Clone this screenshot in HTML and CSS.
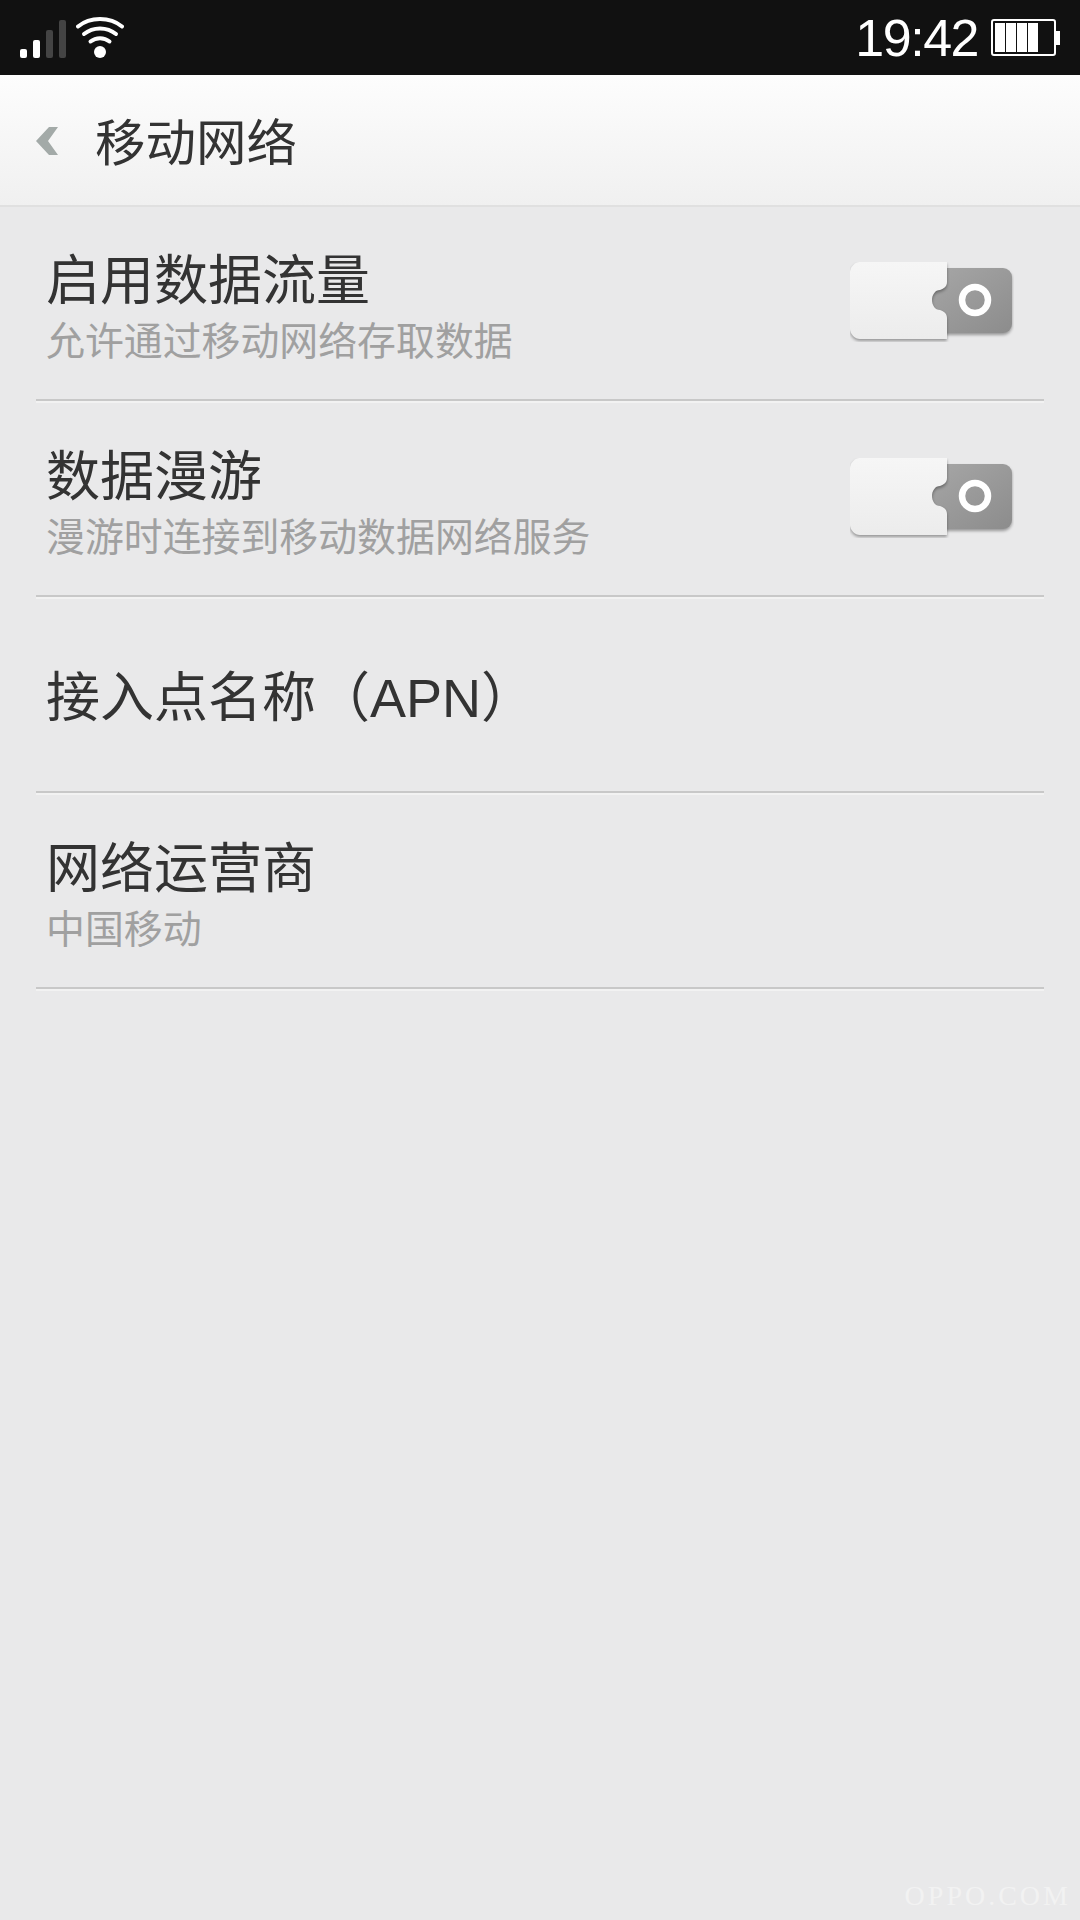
FILE: index.html
```html
<!DOCTYPE html>
<html lang="zh-CN">
<head>
    <meta charset="UTF-8">
    <title>移动网络</title>
    <link rel="stylesheet" href="styles.css">
</head>
<body>
    <svg class="defs" width="0" height="0">
        <defs>
            <linearGradient id="cap" x1="0" y1="0" x2="0" y2="1">
                <stop offset="0" stop-color="#f6f6f6"/>
                <stop offset="1" stop-color="#ececec"/>
            </linearGradient>
            <linearGradient id="track" x1="0" y1="0" x2="1" y2="1">
                <stop offset="0" stop-color="#a8a8a8"/>
                <stop offset="1" stop-color="#8c8c8c"/>
            </linearGradient>
            <symbol id="switch" viewBox="0 0 164 80">
                <rect class="switch-part" x="70" y="6" width="92" height="65" rx="9" fill="url(#track)"/>
                <circle cx="125" cy="38" r="13" fill="none" stroke="#fff" stroke-width="6.500"/>
                <path class="switch-part" d="M10 0H97V20C97 25 93 27 90 28C85 28 82 33 82 38C82 43 85 48 90 48C93 49 97 51 97 56V77H10C5 77 0 72 0 67V10C0 5 5 0 10 0Z" fill="url(#cap)"/>
            </symbol>
        </defs>
    </svg>

    <div class="statusbar">
        <div class="status-left">
            <svg class="signal" width="48" height="38" viewBox="0 0 48 38">
                <rect x="0" y="29" width="7" height="9" rx="2" fill="#fff"/>
                <rect x="13" y="20" width="7" height="18" rx="2" fill="#fff"/>
                <rect x="26" y="10" width="7" height="28" rx="2" fill="#444"/>
                <rect x="39" y="0" width="7" height="38" rx="2" fill="#444"/>
            </svg>
            <svg class="wifi" width="48" height="41" viewBox="0 0 48 41">
                <path d="M2 9.500C14 -0.500 34 -0.500 46 9.500" fill="none" stroke="#fff" stroke-width="4" stroke-linecap="round"/>
                <path d="M8 17C17 9.500 31 9.500 40 17" fill="none" stroke="#fff" stroke-width="4" stroke-linecap="round"/>
                <path d="M14.500 24.500C20 20 28 20 33.500 24.500" fill="none" stroke="#fff" stroke-width="4" stroke-linecap="round"/>
                <circle cx="24" cy="35" r="6" fill="#fff"/>
            </svg>
        </div>
        <div class="status-right">
            <span class="time">19:42</span>
            <div class="battery">
                <div class="battery-body">
                    <span class="cell"></span>
                    <span class="cell"></span>
                    <span class="cell"></span>
                    <span class="cell"></span>
                </div>
                <div class="battery-tip"></div>
            </div>
        </div>
    </div>

    <div class="titlebar">
        <svg class="back" width="24" height="28" viewBox="0 0 24 28">
            <path d="M13 0H22L12 14L22 28H13L0 14Z" fill="#a3aaa8"/>
        </svg>
        <h1 class="title">移动网络</h1>
    </div>

    <div class="list">
        <div class="row">
            <div class="row-text">
                <div class="row-title">启用数据流量</div>
                <div class="row-sub">允许通过移动网络存取数据</div>
            </div>
            <svg class="toggle" width="164" height="80"><use href="#switch"/></svg>
        </div>
        <div class="row">
            <div class="row-text">
                <div class="row-title">数据漫游</div>
                <div class="row-sub">漫游时连接到移动数据网络服务</div>
            </div>
            <svg class="toggle" width="164" height="80"><use href="#switch"/></svg>
        </div>
        <div class="row">
            <div class="row-text single">
                <div class="row-title">接入点名称（APN）</div>
            </div>
        </div>
        <div class="row">
            <div class="row-text">
                <div class="row-title">网络运营商</div>
                <div class="row-sub">中国移动</div>
            </div>
        </div>
    </div>

    <div class="watermark">OPPO.COM</div>
</body>
</html>
```

FILE: styles.css
```css
:root {
    --page-bg: #e9e9ea;
    --bar-bg: #111111;
    --text-dark: #333333;
    --text-light: #a0a0a0;
    --divider: #c8c8c8;
}

html, body {
    height: 100%;
}

body {
    margin: 0;
    background-color: var(--page-bg);
    font-family: "Liberation Sans", "Noto Sans CJK SC", sans-serif;
    color: var(--text-dark);
    display: flex;
    flex-direction: column;
    overflow: hidden;
}

.defs {
    display: block;
    height: 0;
}

.statusbar {
    height: 75px;
    flex-shrink: 0;
    background-color: var(--bar-bg);
    display: flex;
    justify-content: space-between;
    align-items: center;
    padding: 0 20px;
    box-sizing: border-box;
}

.status-left {
    display: flex;
    align-items: flex-end;
    gap: 8px;
    align-self: flex-start;
    height: 58px;
}

.status-right {
    display: flex;
    align-items: center;
    gap: 13px;
}

.time {
    color: #ffffff;
    font-size: 52px;
    letter-spacing: -1.500px;
    line-height: 75px;
    padding-top: 2px;
}

.battery {
    display: flex;
    align-items: center;
}

.battery-body {
    width: 65px;
    height: 37px;
    border: 2px solid #ffffff;
    border-radius: 3px;
    display: flex;
    gap: 1px;
    padding: 2px;
    box-sizing: border-box;
}

.cell {
    width: 10px;
    background-color: #ffffff;
}

.battery-tip {
    width: 4px;
    height: 14px;
    background-color: #ffffff;
}

.titlebar {
    height: 130px;
    flex-shrink: 0;
    background: linear-gradient(#fdfdfd, #f0f0f0);
    display: flex;
    align-items: center;
    padding-left: 36px;
    box-sizing: border-box;
    box-shadow: 0 2px 0 #e0e0e0;
}

.back {
    margin-right: 35px;
    margin-top: 2px;
}

.title {
    font-size: 50.500px;
    font-weight: normal;
    margin: 0 0 2px;
}

.list {
    padding: 0 36px;
}

.row {
    height: 196px;
    border-bottom: 2px solid var(--divider);
    box-shadow: 0 2px 0 #f2f2f2;
    display: flex;
    justify-content: space-between;
    align-items: center;
    padding: 0 30px 0 10px;
    box-sizing: border-box;
}

.row-text {
    padding-top: 11px;
}

.row-text.single {
    padding-top: 7px;
}

.row-title {
    font-size: 54px;
    line-height: 66px;
}

.row-sub {
    font-size: 38.900px;
    line-height: 50px;
    margin-top: 3px;
    color: var(--text-light);
}

.toggle {
    display: block;
}

.switch-part {
    filter: drop-shadow(0 2px 1.500px rgba(0, 0, 0, 0.35));
}

.watermark {
    position: absolute;
    right: 9px;
    bottom: 8px;
    font-family: "Liberation Serif", serif;
    font-size: 28px;
    letter-spacing: 3px;
    color: #f2f2f2;
}
```
